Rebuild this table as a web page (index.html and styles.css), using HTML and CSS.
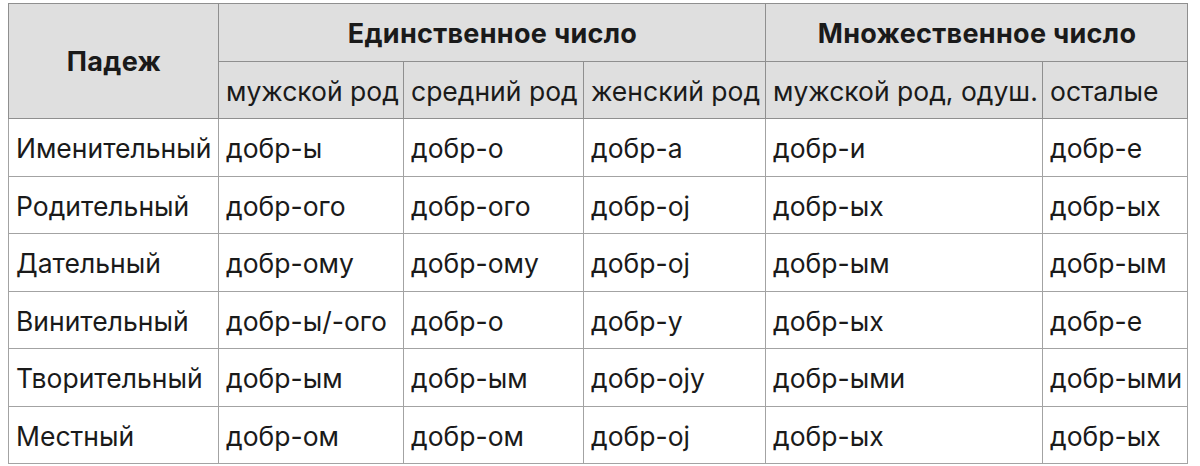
FILE: index.html
```html
<!DOCTYPE html>
<html lang="ru">
<head>
<meta charset="utf-8">
<title>Склонение прилагательного</title>
<link rel="stylesheet" href="styles.css">
</head>
<body>
<table class="decl">
  <colgroup>
    <col class="c-case">
    <col class="c-m">
    <col class="c-n">
    <col class="c-f">
    <col class="c-pa">
    <col class="c-po">
  </colgroup>
  <thead>
    <tr class="h1">
      <th rowspan="2" class="case-h">Падеж</th>
      <th colspan="3" class="grp">Единственное число</th>
      <th colspan="2" class="grp">Множественное число</th>
    </tr>
    <tr class="h2">
      <th class="sub">мужской род</th>
      <th class="sub">средний род</th>
      <th class="sub">женский род</th>
      <th class="sub">мужской род, одуш.</th>
      <th class="sub">осталые</th>
    </tr>
  </thead>
  <tbody>
    <tr><td>Именительный</td><td>добр-ы</td><td>добр-о</td><td>добр-а</td><td>добр-и</td><td>добр-е</td></tr>
    <tr><td>Родительный</td><td>добр-ого</td><td>добр-ого</td><td>добр-ој</td><td>добр-ых</td><td>добр-ых</td></tr>
    <tr><td>Дательный</td><td>добр-ому</td><td>добр-ому</td><td>добр-ој</td><td>добр-ым</td><td>добр-ым</td></tr>
    <tr><td>Винительный</td><td>добр-ы/-ого</td><td>добр-о</td><td>добр-у</td><td>добр-ых</td><td>добр-е</td></tr>
    <tr><td>Творительный</td><td>добр-ым</td><td>добр-ым</td><td>добр-оју</td><td>добр-ыми</td><td>добр-ыми</td></tr>
    <tr><td>Местный</td><td>добр-ом</td><td>добр-ом</td><td>добр-ој</td><td>добр-ых</td><td>добр-ых</td></tr>
  </tbody>
</table>
</body>
</html>
```

FILE: styles.css
```css
html, body {
  margin: 0;
  padding: 0;
  background: #ffffff;
}

body {
  padding: 3px 0 0 8px;
  font-family: Inter, "Noto Sans", "Liberation Sans", sans-serif;
  color: #1a1a1a;
}

.decl {
  border-collapse: collapse;
  table-layout: fixed;
  width: 1179px;
  font-size: 26.5px;
}

.c-case { width: 210px; }
.c-m { width: 185px; }
.c-n { width: 180px; }
.c-f { width: 182px; }
.c-pa { width: 277px; }
.c-po { width: 145px; }

.decl th,
.decl td {
  border: 1px solid #a3a3a3;
  padding: 2px 6px 0 7px;
  text-align: left;
  white-space: nowrap;
  font-weight: 400;
  line-height: 30px;
}

.decl thead th {
  background: #dfdfdf;
  border-color: #8f8f8f;
}

.decl .case-h,
.decl .grp {
  text-align: center;
  font-weight: 700;
  font-size: 27px;
  letter-spacing: 0.3px;
}

.h1 th { height: 55px; }
.h2 th { height: 54px; }

.decl tbody td { height: 54.5px; }
```
